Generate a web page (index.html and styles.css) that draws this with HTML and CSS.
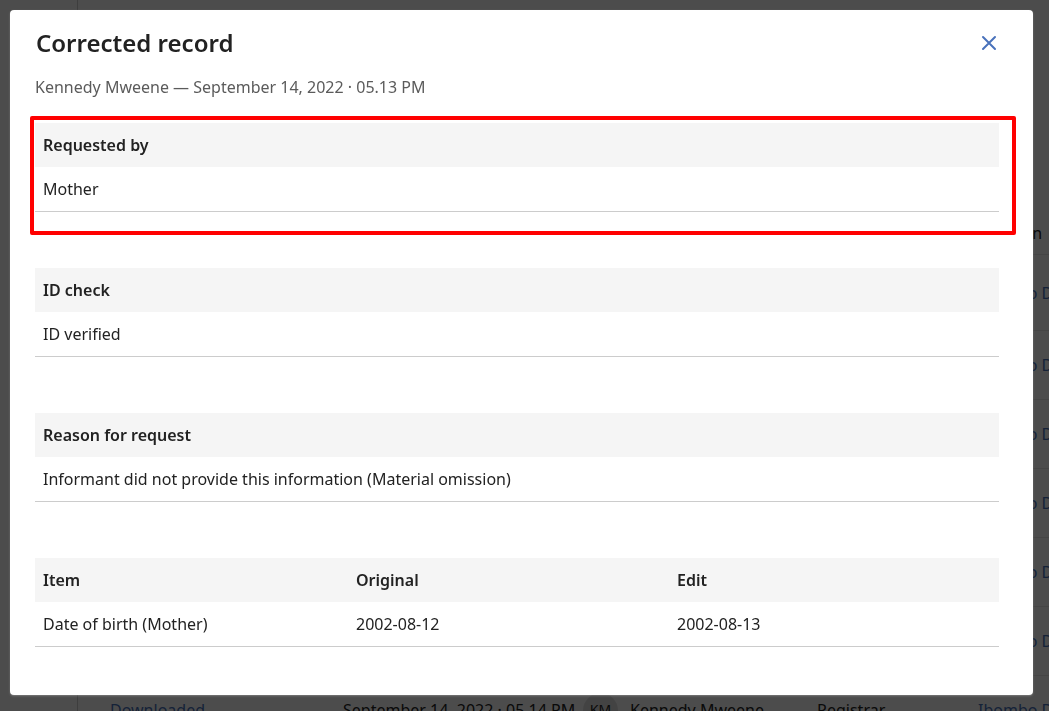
FILE: index.html
```html
<!doctype html>
<html lang="en">
<head>
    <meta charset="UTF-8">
    <meta name="viewport" content="width=device-width, initial-scale=1.0">
    <title>Corrected record</title>
    <link rel="stylesheet" href="styles.css">
</head>
<body>
<div class="page">
    <div class="sidebar"></div>
    <div class="main">
        <div class="list">
            <div class="list-head">
                <span>Action</span>
                <span>Date</span>
                <span>By</span>
                <span>Role</span>
                <span>Location</span>
            </div>
            <div class="list-row first">
                <span class="link">Assigned</span>
                <span>September 14, 2022 · 05.20 PM</span>
                <span class="user"><span class="avatar">KM</span>Kennedy Mweene</span>
                <span>Registrar</span>
                <span class="link">Ibombo District</span>
            </div>
            <div class="list-row">
                <span class="link">Corrected record</span>
                <span>September 14, 2022 · 05.13 PM</span>
                <span class="user"><span class="avatar">KM</span>Kennedy Mweene</span>
                <span>Registrar</span>
                <span class="link">Ibombo District</span>
            </div>
            <div class="list-row">
                <span class="link">Unassigned</span>
                <span>September 14, 2022 · 05.10 PM</span>
                <span class="user"><span class="avatar">KM</span>Kennedy Mweene</span>
                <span>Registrar</span>
                <span class="link">Ibombo District</span>
            </div>
            <div class="list-row">
                <span class="link">Registered</span>
                <span>September 14, 2022 · 05.02 PM</span>
                <span class="user"><span class="avatar">KM</span>Kennedy Mweene</span>
                <span>Registrar</span>
                <span class="link">Ibombo District</span>
            </div>
            <div class="list-row">
                <span class="link">Assigned</span>
                <span>September 14, 2022 · 04.58 PM</span>
                <span class="user"><span class="avatar">KM</span>Kennedy Mweene</span>
                <span>Registrar</span>
                <span class="link">Ibombo District</span>
            </div>
            <div class="list-row">
                <span class="link">Viewed</span>
                <span>September 14, 2022 · 04.55 PM</span>
                <span class="user"><span class="avatar">KM</span>Kennedy Mweene</span>
                <span>Registrar</span>
                <span class="link">Ibombo District</span>
            </div>
            <div class="list-row">
                <span class="link">Downloaded</span>
                <span>September 14, 2022 · 05.14 PM</span>
                <span class="user"><span class="avatar">KM</span>Kennedy Mweene</span>
                <span>Registrar</span>
                <span class="link">Ibombo District</span>
            </div>
        </div>
    </div>
</div>

<div class="overlay"></div>

<div class="modal">
    <div class="modal-head">
        <h1>Corrected record</h1>
        <button class="close" type="button" aria-label="Close">
            <svg width="16" height="16" viewBox="0 0 16 16">
                <path d="M2 2 L14 14 M14 2 L2 14" stroke="#4972bb" stroke-width="2" stroke-linecap="round" fill="none"/>
            </svg>
        </button>
    </div>
    <p class="meta">Kennedy Mweene — September 14, 2022 · 05.13 PM</p>

    <section class="block highlighted">
        <table class="data">
            <thead><tr><th>Requested by</th></tr></thead>
            <tbody><tr><td>Mother</td></tr></tbody>
        </table>
    </section>

    <section class="block">
        <table class="data">
            <thead><tr><th>ID check</th></tr></thead>
            <tbody><tr><td>ID verified</td></tr></tbody>
        </table>
    </section>

    <section class="block">
        <table class="data">
            <thead><tr><th>Reason for request</th></tr></thead>
            <tbody><tr><td>Informant did not provide this information (Material omission)</td></tr></tbody>
        </table>
    </section>

    <section class="block">
        <table class="data changes">
            <thead>
            <tr><th class="c-item">Item</th><th class="c-orig">Original</th><th>Edit</th></tr>
            </thead>
            <tbody>
            <tr><td>Date of birth (Mother)</td><td>2002-08-12</td><td>2002-08-13</td></tr>
            </tbody>
        </table>
    </section>
</div>
</body>
</html>
```

FILE: styles.css
```css
* {
    margin: 0;
    padding: 0;
    box-sizing: border-box;
}

body {
    font-family: "Noto Sans", "Open Sans", sans-serif;
    font-size: 16px;
    line-height: 24px;
    color: #222222;
    background: #ffffff;
    width: 1049px;
    height: 711px;
    overflow: hidden;
}

/* page behind the modal */
.page {
    display: flex;
    height: 711px;
}

.sidebar {
    flex: 0 0 78px;
    border-right: 1px solid #d0d0d0;
}

.main {
    flex: 1;
    min-width: 0;
    padding-top: 211px;
}

.list-head,
.list-row {
    display: grid;
    grid-template-columns: 233px 240px 234px 161px 1fr;
    align-items: center;
    padding-left: 32px;
    white-space: nowrap;
    border-bottom: 1px solid #e8e8e8;
}

.list-head {
    height: 44px;
}

.list-row {
    height: 69px;
}

.list-row.first {
    height: 76px;
}

.list-row .link {
    color: #4972bb;
}

.user {
    display: flex;
    align-items: center;
    gap: 12px;
}

.avatar {
    width: 35px;
    height: 35px;
    border-radius: 50%;
    background: #e2e2e2;
    display: flex;
    align-items: center;
    justify-content: center;
    font-size: 14px;
}

.overlay {
    position: fixed;
    left: 0;
    top: 0;
    right: 0;
    bottom: 0;
    background: rgba(0, 0, 0, 0.7);
}

/* modal */
.modal {
    position: fixed;
    left: 10px;
    top: 10px;
    width: 1023px;
    height: 685px;
    background: #ffffff;
    border-radius: 4px;
    box-shadow: 0 1px 2px rgba(255, 255, 255, 0.25);
    padding: 17px 34px 48px 25px;
}

.modal-head {
    display: flex;
    align-items: center;
    justify-content: space-between;
}

.modal-head h1 {
    font-size: 24px;
    line-height: 32px;
    font-weight: 600;
    color: #222222;
    padding-left: 1px;
}

.close {
    border: none;
    background: none;
    width: 16px;
    height: 16px;
    margin-right: 2px;
    display: flex;
    cursor: pointer;
}

.meta {
    margin: 16px 0 24px;
    color: #5b5b5b;
}

.block {
    margin-bottom: 56px;
    position: relative;
}

.highlighted::after {
    content: "";
    position: absolute;
    top: -7px;
    left: -5px;
    right: -17px;
    bottom: -23px;
    border: 4px solid #ff0000;
    border-radius: 2px;
}

.data {
    width: 100%;
    border-collapse: collapse;
    table-layout: fixed;
}

.data th {
    background: #f5f5f5;
    font-weight: 600;
    text-align: left;
    padding: 10px 8px;
    height: 44px;
}

.data td {
    padding: 10px 8px;
    height: 44px;
    border-bottom: 1px solid #cccccc;
}

.changes .c-item {
    width: 313px;
}

.changes .c-orig {
    width: 321px;
}
```
